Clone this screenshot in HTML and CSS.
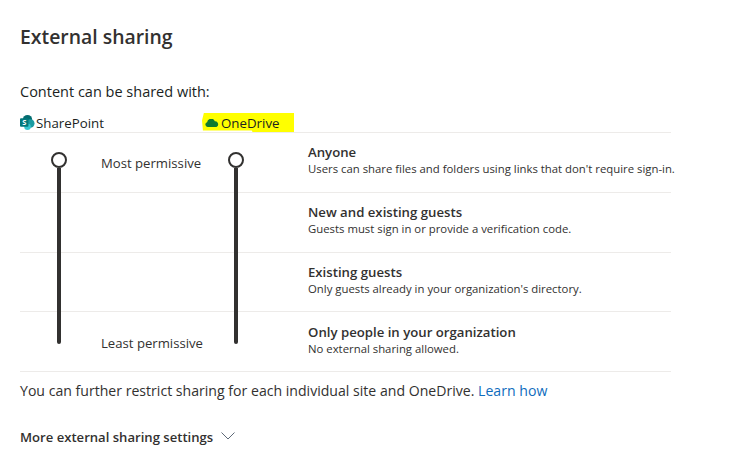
FILE: index.html
```html
<!DOCTYPE html>
<html lang="en">
<head>
    <meta charset="UTF-8">
    <title>External sharing</title>
    <link rel="stylesheet" href="styles.css">
</head>
<body>
    <div class="panel">
        <h1 class="title">External sharing</h1>
        <p class="subtitle">Content can be shared with:</p>

        <div class="apps">
            <div class="app app-sp">
                <svg width="15" height="15" viewBox="0 0 16 16">
                    <circle cx="8" cy="5" r="5" fill="#036c70"/>
                    <circle cx="11" cy="9" r="4.5" fill="#1a9ba1"/>
                    <circle cx="8" cy="12.5" r="3.5" fill="#37c6d0"/>
                    <rect x="0" y="3.5" width="9" height="9" rx="1" fill="#03787c"/>
                    <text x="4.5" y="11" class="sp-letter" text-anchor="middle">S</text>
                </svg>
                SharePoint
            </div>
            <div class="app app-od">
                <svg width="14" height="8" viewBox="0 0 14 8">
                    <path d="M2.6 8a2.4 2.4 0 0 1-.5-4.7A4 4 0 0 1 9.8 2.3a3 3 0 0 1 1.6 5.7z" fill="#0f7b2e"/>
                </svg>
                OneDrive
            </div>
        </div>

        <div class="levels">
            <div class="slider slider-sp"><span class="knob"></span><span class="track"></span></div>
            <div class="slider slider-od"><span class="knob"></span><span class="track"></span></div>
            <div class="scale-label scale-most">Most permissive</div>
            <div class="scale-label scale-least">Least permissive</div>

            <div class="level level-1">
                <div class="level-name">Anyone</div>
                <div class="level-desc">Users can share files and folders using links that don't require sign-in.</div>
            </div>
            <div class="level level-2">
                <div class="level-name">New and existing guests</div>
                <div class="level-desc">Guests must sign in or provide a verification code.</div>
            </div>
            <div class="level level-3">
                <div class="level-name">Existing guests</div>
                <div class="level-desc">Only guests already in your organization's directory.</div>
            </div>
            <div class="level level-4">
                <div class="level-name">Only people in your organization</div>
                <div class="level-desc">No external sharing allowed.</div>
            </div>
        </div>

        <p class="note">You can further restrict sharing for each individual site and OneDrive. <a href="#">Learn how</a></p>

        <div class="more">
            More external sharing settings
            <svg class="chevron" width="14" height="8" viewBox="0 0 14 8"><path d="M.5.5l6.5 6.5L13.5.5" fill="none" stroke="#5f6a78" stroke-width="1"/></svg>
        </div>
    </div>
</body>
</html>
```

FILE: styles.css
```css
body {
    margin: 0;
    background: #ffffff;
    color: #323130;
    font-family: "Open Sans", sans-serif;
}

.panel {
    width: 651px;
    padding: 24px 0 0 20px;
}

.title {
    margin: 0;
    font-size: 19.4px;
    line-height: 26px;
    font-weight: 600;
}

.subtitle {
    margin: 32px 0 0;
    font-size: 14.5px;
    line-height: 20px;
    font-weight: 500;
    color: #201f1e;
}

.apps {
    display: grid;
    grid-template-columns: 183px 1fr;
    height: 19px;
    margin-top: 11px;
    font-size: 13.3px;
    font-weight: 500;
    color: #201f1e;
}

.app {
    display: flex;
    align-items: center;
    gap: 1px;
}

.app-od {
    width: 92px;
    margin-left: -1px;
    padding-left: 3px;
    box-sizing: border-box;
    background: #ffff00;
    gap: 2px;
    clip-path: polygon(2% 0, 100% 0, 100% 100%, 55% 100%, 54% 92%, 1% 92%, 0 40%);
}

.sp-letter {
    font-size: 8px;
    font-weight: 700;
    fill: #ffffff;
}

.levels {
    display: grid;
    grid-template-columns: 81px 207px 1fr;
    grid-template-rows: 60px 60px 59px 60px;
    border-bottom: 1px solid #edebe9;
}

.level {
    grid-column: 1 / -1;
    padding: 11px 0 0 288px;
    border-top: 1px solid #edebe9;
}

.level-1 { grid-row: 1; }
.level-2 { grid-row: 2; }
.level-3 { grid-row: 3; }

.level-4 {
    grid-row: 4;
    padding-top: 12px;
}

.level-name {
    font-size: 13.2px;
    line-height: 17px;
    font-weight: 600;
}

.level-desc {
    font-size: 11.35px;
    line-height: 15px;
    white-space: nowrap;
}

.slider {
    grid-row: 1 / -1;
    z-index: 1;
    display: flex;
    flex-direction: column;
    align-items: center;
    width: 16px;
    padding-top: 20px;
}

.slider-sp {
    grid-column: 1;
    margin-left: 31px;
}

.slider-od {
    grid-column: 2;
    margin-left: 127px;
}

.knob {
    box-sizing: border-box;
    flex: none;
    width: 16px;
    height: 16px;
    border: 2px solid #323130;
    border-radius: 50%;
    background: #ffffff;
}

.track {
    width: 4px;
    height: 176px;
    background: #323130;
    border-radius: 0 0 2px 2px;
}

.scale-label {
    grid-column: 2;
    z-index: 1;
    font-size: 13.15px;
    line-height: 18px;
}

.scale-most {
    grid-row: 1;
    padding-top: 22px;
}

.scale-least {
    grid-row: 4;
    padding-top: 23px;
}

.note {
    margin: 9px 0 0;
    font-size: 14.1px;
    line-height: 20px;
}

.note a {
    color: #0f6cbd;
    text-decoration: none;
}

.more {
    display: flex;
    align-items: center;
    gap: 8px;
    margin-top: 27px;
    font-size: 13.1px;
    line-height: 18px;
    font-weight: 600;
}

.chevron {
    margin-bottom: 3px;
}
```
